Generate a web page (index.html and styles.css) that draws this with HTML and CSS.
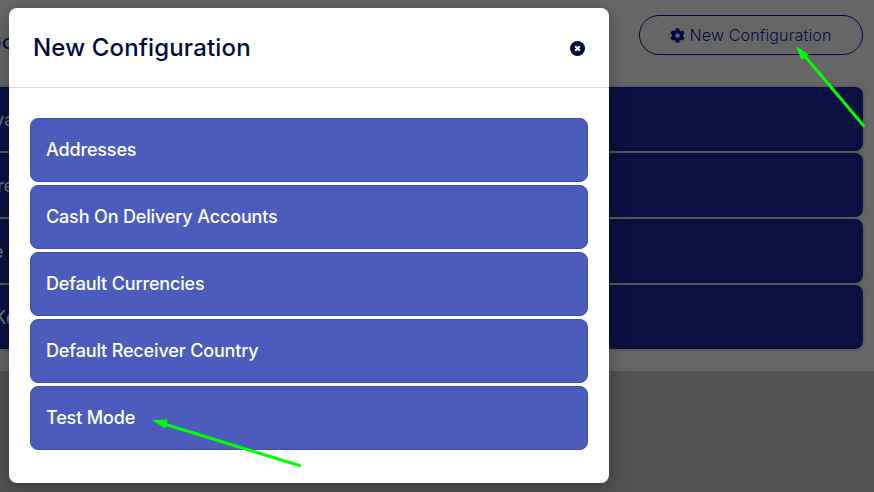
FILE: index.html
```
<!DOCTYPE html>
<html lang="en">
<head>
    <meta charset="UTF-8">
    <meta name="viewport" content="width=device-width, initial-scale=1.0">
    <title>New Configuration</title>
    <link rel="stylesheet" href="styles.css">
</head>
<body>
    <div class="page">
        <div class="page-header">
            <h1 class="page-title"><span class="accent">G</span>o</h1>
            <button type="button" class="new-button">
                <svg class="gear" viewBox="0 0 512 512"><path fill="currentColor" d="M487.4 315.7l-42.600-24.600c4.300-23.200 4.300-47 0-70.200l42.600-24.600c4.900-2.800 7.100-8.600 5.500-14-11.100-35.600-30-67.800-54.700-94.600-3.800-4.100-10-5.100-14.800-2.300L380.800 110c-17.900-15.400-38.500-27.300-60.800-35.100V25.800c0-5.600-3.900-10.500-9.400-11.700-36.700-8.200-74.300-7.800-109.200 0-5.500 1.200-9.400 6.100-9.400 11.700V75c-22.200 7.900-42.800 19.800-60.800 35.100L88.700 85.500c-4.900-2.800-11-1.900-14.800 2.300-24.700 26.700-43.600 58.900-54.700 94.600-1.700 5.400.6 11.200 5.500 14L67.300 221c-4.300 23.200-4.300 47 0 70.200l-42.600 24.600c-4.900 2.800-7.100 8.600-5.500 14 11.100 35.600 30 67.800 54.700 94.600 3.800 4.100 10 5.100 14.800 2.300l42.600-24.600c17.900 15.400 38.500 27.300 60.800 35.100v49.200c0 5.600 3.900 10.500 9.400 11.700 36.700 8.200 74.300 7.800 109.200 0 5.500-1.200 9.400-6.100 9.400-11.700v-49.200c22.200-7.900 42.800-19.800 60.800-35.100l42.600 24.600c4.900 2.800 11 1.900 14.800-2.300 24.700-26.700 43.600-58.900 54.700-94.600 1.500-5.500-.7-11.300-5.600-14.100zM256 336c-44.100 0-80-35.900-80-80s35.900-80 80-80 80 35.900 80 80-35.900 80-80 80z"/></svg>
                <span>New Configuration</span>
            </button>
        </div>
        <div class="page-list">
            <div class="page-row"><span class="label-va">va</span></div>
            <div class="page-row"><span class="label-re">re</span></div>
            <div class="page-row"><span class="label-e">e</span></div>
            <div class="page-row"><span class="label-ke">Ke</span></div>
        </div>
    </div>

    <div class="modal">
        <div class="modal-header">
            <h2>New Configuration</h2>
            <button type="button" class="close" aria-label="Close">
                <svg viewBox="0 0 16 16"><circle cx="7.500" cy="8.500" r="7.500" fill="#020a42"/><path d="M5.200 6.200l4.600 4.600M9.800 6.200l-4.600 4.600" stroke="#fff" stroke-width="2"/></svg>
            </button>
        </div>
        <div class="modal-body">
            <div class="option">Addresses</div>
            <div class="option">Cash On Delivery Accounts</div>
            <div class="option">Default Currencies</div>
            <div class="option">Default Receiver Country</div>
            <div class="option">Test Mode</div>
        </div>
    </div>

    <svg class="arrows" viewBox="0 0 874 492">
        <path d="M863.500 125.500L803 54M299.500 465.500L164 424"/>
        <polygon points="796,46 808.500,54.500 801.500,60"/>
        <polygon points="152,420 167.500,419.500 165,428.500"/>
    </svg>
</body>
</html>
```

FILE: styles.css
```
* {
    box-sizing: border-box;
}
body {
    margin: 0;
    height: 492px;
    overflow: hidden;
    background-color: #525252;
    font-family: 'Inter', sans-serif;
    color: #020a42;
}
.page {
    height: 371px;
    padding: 15px 11px 0 0;
    background-color: #666666;
}
.page-header {
    display: flex;
    justify-content: space-between;
    height: 72px;
}
.page-title {
    margin: 13px 0 0 -13px;
    font-size: 20px;
    font-weight: 500;
    line-height: 28px;
}
.accent {
    color: #103d5c;
}
.new-button {
    display: flex;
    align-items: center;
    justify-content: center;
    gap: 4px;
    width: 224px;
    height: 40px;
    padding: 0;
    border: 1px solid #020a42;
    border-radius: 20px;
    background: none;
    font-family: 'Inter', sans-serif;
    font-size: 16px;
    font-weight: 300;
    letter-spacing: 0.15px;
    color: #020a42;
}
.gear {
    width: 15px;
    height: 15px;
}
.page-list {
    display: flex;
    flex-direction: column;
    gap: 2px;
}
.page-row {
    display: flex;
    align-items: center;
    height: 64px;
    border-radius: 0 8px 8px 0;
    background-color: #0a1142;
    box-shadow: 0 0 5px rgba(0, 0, 0, 0.2);
    font-size: 18px;
    font-weight: 500;
    color: #707070;
}
.label-va {
    margin-left: -6px;
}
.label-re {
    margin-left: -3px;
}
.label-e {
    margin-left: -7px;
}
.label-ke {
    margin-left: -6px;
}
.modal {
    position: absolute;
    top: 8px;
    left: 9px;
    width: 600px;
    height: 475px;
    border-radius: 8px;
    background-color: #ffffff;
    box-shadow: 0 4px 20px rgba(0, 0, 0, 0.3);
}
.modal-header {
    display: flex;
    align-items: center;
    justify-content: space-between;
    height: 80px;
    padding: 0 23px 0 24px;
    border-bottom: 1px solid #dcdcdc;
}
.modal-header h2 {
    margin: 0;
    font-size: 24px;
    font-weight: 500;
    letter-spacing: 0.15px;
}
.close {
    display: flex;
    padding: 0;
    border: none;
    background: none;
}
.close svg {
    width: 16px;
    height: 16px;
}
.modal-body {
    display: flex;
    flex-direction: column;
    gap: 3px;
    padding: 30px 21px;
}
.option {
    display: flex;
    align-items: center;
    height: 64px;
    padding: 0 15px 1px;
    border: 1px solid #4050a8;
    border-radius: 8px;
    background-color: #4c5cbd;
    font-size: 18px;
    font-weight: 500;
    letter-spacing: -0.15px;
    color: #ffffff;
}
.arrows {
    position: absolute;
    top: 0;
    left: 0;
    width: 874px;
    height: 492px;
    pointer-events: none;
}
.arrows path {
    stroke: #00ff00;
    stroke-width: 3;
    stroke-linecap: round;
}
.arrows polygon {
    fill: #00ff00;
}
```
